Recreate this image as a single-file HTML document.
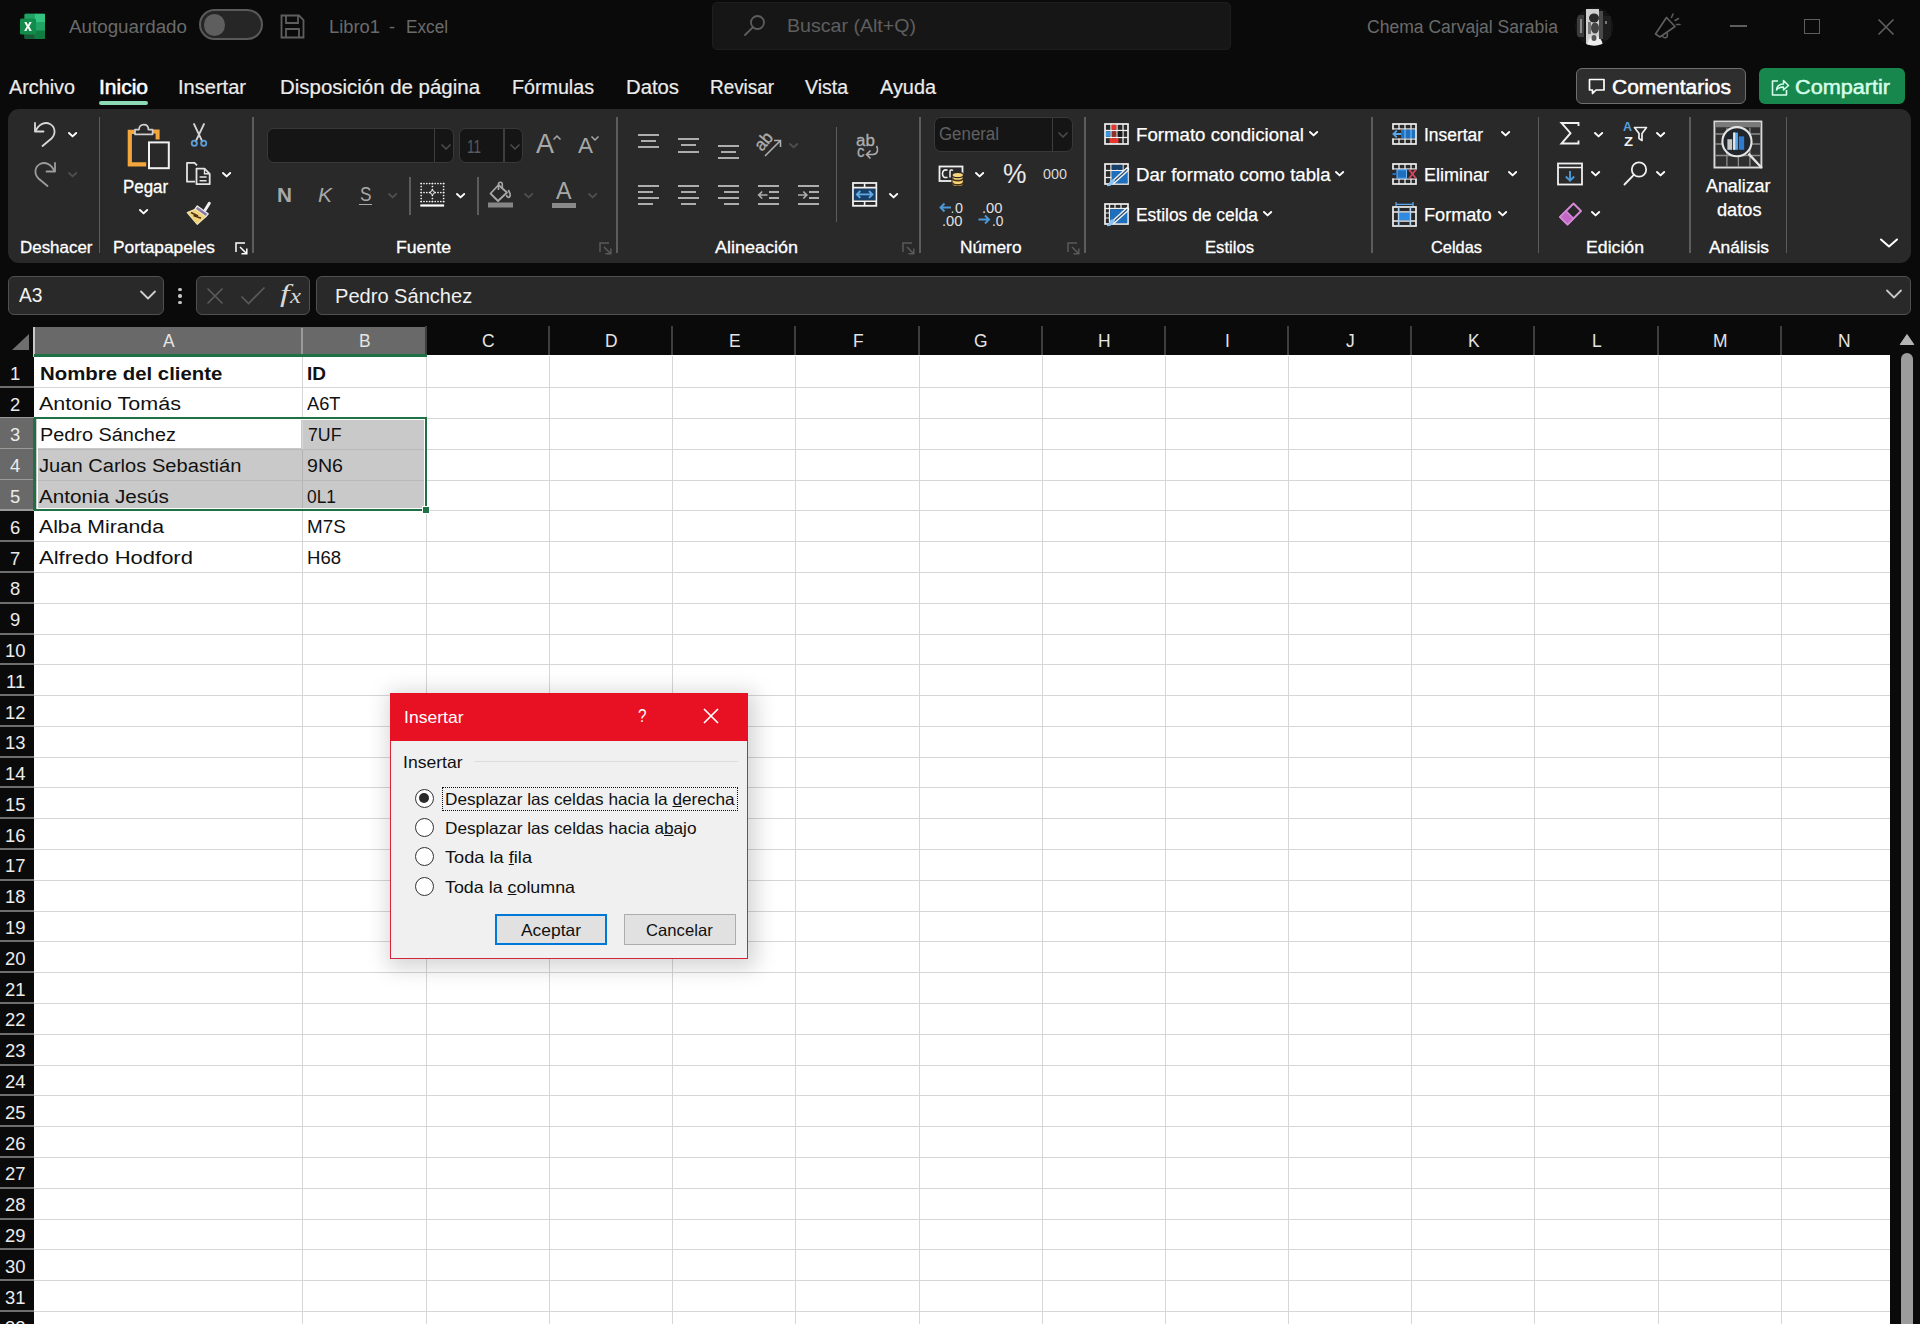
<!DOCTYPE html><html><head><meta charset="utf-8"><title>Excel</title><style>
html,body{margin:0;padding:0;background:#0a0a0a;overflow:hidden;}
html{width:1920px;height:1324px;}
body{width:1920px;height:1324px;position:relative;overflow:hidden;font-family:"Liberation Sans",sans-serif;}
.a{position:absolute;display:block;}
.t{position:absolute;white-space:pre;transform-origin:0 50%;display:block;}
svg{overflow:visible;}
</style></head><body>
<svg class="a" style="left:20px;top:13px;" width="26" height="26" viewBox="0 0 26 26">
<rect x="4.6" y="0.8" width="20.4" height="25" rx="1.5" fill="#21a366"/>
<rect x="4.6" y="0.8" width="10.2" height="8.4" fill="#21a366"/><rect x="14.8" y="0.8" width="10.2" height="8.4" fill="#33c481"/>
<rect x="4.6" y="9.2" width="10.2" height="8.3" fill="#107c41"/><rect x="14.8" y="9.2" width="10.2" height="8.3" fill="#21a366"/>
<rect x="4.6" y="17.5" width="10.2" height="8.3" fill="#185c37"/><rect x="14.8" y="17.5" width="10.2" height="8.3" fill="#107c41"/>
<rect x="0" y="5.6" width="16" height="16" rx="1.5" fill="#128c4a"/>
<path d="M4.2 9 L6.5 9 L8 12 L9.5 9 L11.7 9 L9.2 13.5 L11.8 18 L9.5 18 L7.9 14.9 L6.3 18 L4.1 18 L6.7 13.5 Z" fill="#fff"/>
</svg>
<span class="t" style="left:69.00px;top:17.76px;font-size:18px;line-height:18px;color:#6a6a6a;transform:scaleX(1.0433);">Autoguardado</span>
<div class="a" style="left:198.7px;top:9.3px;width:64.3px;height:31px;border:2px solid #5a5a5a;border-radius:16px;box-sizing:border-box;background:#262626;"></div>
<div class="a" style="left:203.5px;top:14px;width:21.5px;height:21.5px;background:#5e5e5e;border-radius:50%;"></div>
<svg class="a" style="left:279px;top:13px;" width="27" height="27" viewBox="0 0 27 27"><path d="M2.5 2.5 H20 L24.5 7 V24.5 H2.5 Z" fill="none" stroke="#5e5e5e" stroke-width="1.8"/>
<path d="M7 2.5 V10 H19 V2.5" fill="none" stroke="#5e5e5e" stroke-width="1.8"/>
<path d="M7 24.5 V16 H20 V24.5" fill="none" stroke="#5e5e5e" stroke-width="1.8"/></svg>
<span class="t" style="left:329.00px;top:17.76px;font-size:18px;line-height:18px;color:#6a6a6a;transform:scaleX(1.0192);">Libro1</span>
<span class="t" style="left:389.00px;top:17.76px;font-size:18px;line-height:18px;color:#6a6a6a;transform:scaleX(1.0010);">-</span>
<span class="t" style="left:406.00px;top:17.76px;font-size:18px;line-height:18px;color:#6a6a6a;transform:scaleX(0.9542);">Excel</span>
<div class="a" style="left:712px;top:2px;width:519px;height:48px;background:#161616;border-radius:5px;border:1px solid #1e1e1e;box-sizing:border-box;"></div>
<svg class="a" style="left:742px;top:13px;" width="26" height="26" viewBox="0 0 26 26"><circle cx="15.5" cy="9.5" r="6.5" fill="none" stroke="#5e5e5e" stroke-width="1.8"/><path d="M10.8 14.3 L3 22" stroke="#5e5e5e" stroke-width="1.8" stroke-linecap="round"/></svg>
<span class="t" style="left:787.00px;top:17.34px;font-size:18.5px;line-height:18.5px;color:#5e5e5e;transform:scaleX(1.0589);">Buscar (Alt+Q)</span>
<span class="t" style="left:1367.00px;top:17.76px;font-size:18px;line-height:18px;color:#6a6a6a;transform:scaleX(0.9739);">Chema Carvajal Sarabia</span>
<svg class="a" style="left:1575px;top:7px;" width="38.5" height="39" viewBox="0 0 38.5 39"><defs><clipPath id="av"><circle cx="19.2" cy="19.5" r="19.2"/></clipPath></defs>
<g clip-path="url(#av)"><rect width="39" height="39" fill="#141414"/>
<rect x="2" y="8" width="7" height="22" fill="#3c3c3c"/><rect x="5" y="12" width="2" height="14" fill="#8a8a8a"/>
<rect x="11" y="2" width="13" height="36" fill="#cfcfcf"/>
<ellipse cx="19" cy="11" rx="5" ry="4.5" fill="#2a2a2a"/><ellipse cx="20" cy="21" rx="4" ry="5.5" fill="#444"/><rect x="13" y="15" width="3" height="12" fill="#777"/>
<path d="M12 39 C13 31 16 29 20 29 C24 29 27 32 28 39 Z" fill="#eee"/><ellipse cx="19" cy="31" rx="2.5" ry="3" fill="#555"/>
<rect x="24" y="4" width="4" height="28" fill="#4a4a4a"/><rect x="28" y="9" width="8" height="24" fill="#1e1e1e"/><rect x="30" y="14" width="2" height="3" fill="#777"/></g></svg>
<svg class="a" style="left:1652px;top:12px;" width="30" height="28" viewBox="0 0 30 28"><path d="M3.5 22 L14.5 5.5 L23 14.5 L8 25 Z" fill="none" stroke="#5e5e5e" stroke-width="1.7" stroke-linejoin="round"/>
<path d="M10.5 23.5 C11 26.5 15.5 26.5 15.5 23 L15 20.3" fill="none" stroke="#5e5e5e" stroke-width="1.5"/>
<path d="M19.5 5.5 L21 2 M23 8.5 L26.5 6.5 M24.5 12.5 L28 12.5" stroke="#5e5e5e" stroke-width="1.5" stroke-linecap="round"/></svg>
<div class="a" style="left:1730px;top:25px;width:17px;height:1.6px;background:#5e5e5e;"></div>
<div class="a" style="left:1804px;top:18.7px;width:15.5px;height:15.3px;border:1.6px solid #5e5e5e;box-sizing:border-box;"></div>
<svg class="a" style="left:1876px;top:17px;" width="20" height="20" viewBox="0 0 20 20"><path d="M2.5 2.5 L17.5 17.5 M17.5 2.5 L2.5 17.5" stroke="#5e5e5e" stroke-width="1.7"/></svg>
<span class="t" style="left:9.00px;top:77.07px;font-size:20px;line-height:20px;color:#ececec;transform:scaleX(0.9897);-webkit-text-stroke:0.2px #ececec;">Archivo</span>
<span class="t" style="left:99.00px;top:77.07px;font-size:20px;line-height:20px;color:#fff;transform:scaleX(1.0495);-webkit-text-stroke:0.55px #fff;">Inicio</span>
<span class="t" style="left:178.00px;top:77.07px;font-size:20px;line-height:20px;color:#ececec;transform:scaleX(1.0029);-webkit-text-stroke:0.2px #ececec;">Insertar</span>
<span class="t" style="left:280.00px;top:77.07px;font-size:20px;line-height:20px;color:#ececec;transform:scaleX(1.0221);-webkit-text-stroke:0.2px #ececec;">Disposición de página</span>
<span class="t" style="left:512.00px;top:77.07px;font-size:20px;line-height:20px;color:#ececec;transform:scaleX(0.9838);-webkit-text-stroke:0.2px #ececec;">Fórmulas</span>
<span class="t" style="left:626.00px;top:77.07px;font-size:20px;line-height:20px;color:#ececec;transform:scaleX(1.0144);-webkit-text-stroke:0.2px #ececec;">Datos</span>
<span class="t" style="left:710.00px;top:77.07px;font-size:20px;line-height:20px;color:#ececec;transform:scaleX(0.9441);-webkit-text-stroke:0.2px #ececec;">Revisar</span>
<span class="t" style="left:805.00px;top:77.07px;font-size:20px;line-height:20px;color:#ececec;transform:scaleX(0.9750);-webkit-text-stroke:0.2px #ececec;">Vista</span>
<span class="t" style="left:880.00px;top:77.07px;font-size:20px;line-height:20px;color:#ececec;transform:scaleX(0.9938);-webkit-text-stroke:0.2px #ececec;">Ayuda</span>
<div class="a" style="left:99px;top:101px;width:49px;height:3.5px;background:#8cd9b4;border-radius:2px;"></div>
<div class="a" style="left:1575.5px;top:68.3px;width:170.5px;height:36.2px;background:#2e2e2e;border:1.5px solid #6e6e6e;border-radius:6px;box-sizing:border-box;"></div>
<svg class="a" style="left:1587px;top:77px;" width="20" height="20" viewBox="0 0 20 20"><path d="M2.5 2.5 H17 V13 H9 L5.5 16.5 V13 H2.5 Z" fill="none" stroke="#fff" stroke-width="1.7" stroke-linejoin="round"/></svg>
<span class="t" style="left:1612.00px;top:77.07px;font-size:20px;line-height:20px;color:#fff;transform:scaleX(1.0496);-webkit-text-stroke:0.5px #fff;">Comentarios</span>
<div class="a" style="left:1758.7px;top:68.3px;width:146.3px;height:36.2px;background:#18874e;border-radius:6px;"></div>
<svg class="a" style="left:1769px;top:76px;" width="22" height="22" viewBox="0 0 22 22"><path d="M9 5 H3.5 V19 H17.5 V14" fill="none" stroke="#d4ffea" stroke-width="1.6" stroke-linejoin="round"/>
<path d="M7.5 14 C8 9.5 11 8 14.5 8 V4.5 L19.5 9.5 L14.5 14 V11 C11.5 11 9.5 11.5 7.5 14 Z" fill="none" stroke="#d4ffea" stroke-width="1.5" stroke-linejoin="round"/></svg>
<span class="t" style="left:1795.00px;top:77.07px;font-size:20px;line-height:20px;color:#d4ffea;transform:scaleX(1.0821);-webkit-text-stroke:0.5px #d4ffea;">Compartir</span>
<div class="a" style="left:8px;top:109px;width:1903px;height:154px;background:#292929;border-radius:11px;"></div>
<div class="a" style="left:98.75px;top:117px;width:1.5px;height:136px;background:#5c5c5c;"></div>
<div class="a" style="left:252.25px;top:117px;width:1.5px;height:136px;background:#5c5c5c;"></div>
<div class="a" style="left:616.25px;top:117px;width:1.5px;height:136px;background:#5c5c5c;"></div>
<div class="a" style="left:919.25px;top:117px;width:1.5px;height:136px;background:#5c5c5c;"></div>
<div class="a" style="left:1084.25px;top:117px;width:1.5px;height:136px;background:#5c5c5c;"></div>
<div class="a" style="left:1371.25px;top:117px;width:1.5px;height:136px;background:#5c5c5c;"></div>
<div class="a" style="left:1537.75px;top:117px;width:1.5px;height:136px;background:#5c5c5c;"></div>
<div class="a" style="left:1689.25px;top:117px;width:1.5px;height:136px;background:#5c5c5c;"></div>
<div class="a" style="left:1785.75px;top:117px;width:1.5px;height:136px;background:#5c5c5c;"></div>
<div class="a" style="left:409.4px;top:177px;width:1.3px;height:38px;background:#5c5c5c;"></div>
<div class="a" style="left:477.4px;top:177px;width:1.3px;height:38px;background:#5c5c5c;"></div>
<div class="a" style="left:835.8px;top:127px;width:1.4px;height:95px;background:#5c5c5c;"></div>
<span class="t" style="left:20.00px;top:238.61px;font-size:17px;line-height:17px;color:#fff;transform:scaleX(0.9964);-webkit-text-stroke:0.3px #fff;">Deshacer</span>
<span class="t" style="left:113.00px;top:238.61px;font-size:17px;line-height:17px;color:#fff;transform:scaleX(1.0181);-webkit-text-stroke:0.3px #fff;">Portapapeles</span>
<span class="t" style="left:396.00px;top:238.61px;font-size:17px;line-height:17px;color:#fff;transform:scaleX(1.0392);-webkit-text-stroke:0.3px #fff;">Fuente</span>
<span class="t" style="left:714.50px;top:238.61px;font-size:17px;line-height:17px;color:#fff;transform:scaleX(1.0580);-webkit-text-stroke:0.3px #fff;">Alineación</span>
<span class="t" style="left:960.00px;top:238.61px;font-size:17px;line-height:17px;color:#fff;transform:scaleX(1.0171);-webkit-text-stroke:0.3px #fff;">Número</span>
<span class="t" style="left:1205.00px;top:238.61px;font-size:17px;line-height:17px;color:#fff;transform:scaleX(0.9786);-webkit-text-stroke:0.3px #fff;">Estilos</span>
<span class="t" style="left:1431.00px;top:238.61px;font-size:17px;line-height:17px;color:#fff;transform:scaleX(0.9637);-webkit-text-stroke:0.3px #fff;">Celdas</span>
<span class="t" style="left:1586.00px;top:238.61px;font-size:17px;line-height:17px;color:#fff;transform:scaleX(1.0402);-webkit-text-stroke:0.3px #fff;">Edición</span>
<span class="t" style="left:1709.00px;top:238.61px;font-size:17px;line-height:17px;color:#fff;transform:scaleX(1.0242);-webkit-text-stroke:0.3px #fff;">Análisis</span>
<svg class="a" style="left:235px;top:241.5px;" width="13" height="13" viewBox="0 0 13 13"><path d="M1 10 V1 H10" fill="none" stroke="#fff" stroke-width="1.5"/><path d="M5 5 L11.5 11.5 M11.8 6.5 V11.8 H6.5" fill="none" stroke="#fff" stroke-width="1.5"/></svg>
<svg class="a" style="left:599px;top:241.5px;" width="13" height="13" viewBox="0 0 13 13"><path d="M1 10 V1 H10" fill="none" stroke="#5a5a5a" stroke-width="1.5"/><path d="M5 5 L11.5 11.5 M11.8 6.5 V11.8 H6.5" fill="none" stroke="#5a5a5a" stroke-width="1.5"/></svg>
<svg class="a" style="left:902px;top:241.5px;" width="13" height="13" viewBox="0 0 13 13"><path d="M1 10 V1 H10" fill="none" stroke="#5a5a5a" stroke-width="1.5"/><path d="M5 5 L11.5 11.5 M11.8 6.5 V11.8 H6.5" fill="none" stroke="#5a5a5a" stroke-width="1.5"/></svg>
<svg class="a" style="left:1067px;top:241.5px;" width="13" height="13" viewBox="0 0 13 13"><path d="M1 10 V1 H10" fill="none" stroke="#5a5a5a" stroke-width="1.5"/><path d="M5 5 L11.5 11.5 M11.8 6.5 V11.8 H6.5" fill="none" stroke="#5a5a5a" stroke-width="1.5"/></svg>
<svg class="a" style="left:32px;top:119.5px;" width="26" height="28" viewBox="0 0 26 28"><path d="M3 3 V11.5 H11.5" fill="none" stroke="#d8d8d8" stroke-width="1.8" stroke-linecap="round" stroke-linejoin="round"/><path d="M3.5 11 C7 4 13 1.5 18 4 C23.5 7 24 14 19.5 18.5 L10.5 26" fill="none" stroke="#d8d8d8" stroke-width="1.8" stroke-linecap="round"/></svg>
<svg class="a" style="left:67.4px;top:130.8px;" width="11.2" height="7.4" viewBox="0 0 11.2 7.4"><path d="M2 2 L5.6 5.4 L9.2 2" fill="none" stroke="#fff" stroke-width="1.9" stroke-linecap="round" stroke-linejoin="round"/></svg>
<svg class="a" style="left:32px;top:159.6px;" width="26" height="28" viewBox="0 0 26 28"><path d="M23 3 V11.5 H14.5" fill="none" stroke="#9c9c9c" stroke-width="1.8" stroke-linecap="round" stroke-linejoin="round"/><path d="M22.5 11 C19 4 13 1.5 8 4 C2.5 7 2 14 6.5 18.5 L15.5 26" fill="none" stroke="#9c9c9c" stroke-width="1.8" stroke-linecap="round"/></svg>
<svg class="a" style="left:67.4px;top:171.3px;" width="11.2" height="7.4" viewBox="0 0 11.2 7.4"><path d="M2 2 L5.6 5.4 L9.2 2" fill="none" stroke="#4e4e4e" stroke-width="1.9" stroke-linecap="round" stroke-linejoin="round"/></svg>
<svg class="a" style="left:124px;top:120px;" width="50" height="52" viewBox="124 120 50 52"><path d="M136 131.8 H129.8 V164.3 H146.2" fill="none" stroke="#f2a63c" stroke-width="4.2"/><path d="M152 131.6 H157.6 V139.5" fill="none" stroke="#f2a63c" stroke-width="4"/>
<path d="M135 134.3 V129.6 H139 C139 126.3 141 124.6 143.7 124.6 C146.4 124.6 148.4 126.3 148.4 129.6 H152.6 V134.3 Z" fill="#292929" stroke="#cfcfcf" stroke-width="1.7" stroke-linejoin="round"/>
<rect x="149" y="142.4" width="19.8" height="25.8" fill="#292929" stroke="#f2f2f2" stroke-width="2"/></svg>
<span class="t" style="left:122.50px;top:177.76px;font-size:18px;line-height:18px;color:#fff;transform:scaleX(0.9368);-webkit-text-stroke:0.3px #fff;">Pegar</span>
<svg class="a" style="left:138.4px;top:208px;" width="11.2" height="7.4" viewBox="0 0 11.2 7.4"><path d="M2 2 L5.6 5.4 L9.2 2" fill="none" stroke="#fff" stroke-width="1.9" stroke-linecap="round" stroke-linejoin="round"/></svg>
<svg class="a" style="left:186px;top:120px;" width="26" height="30" viewBox="186 120 26 30"><path d="M194 124 L202.3 141.5 M204 124 L195.7 141.5" stroke="#d4d4d4" stroke-width="1.8" stroke-linecap="round"/>
<circle cx="194.3" cy="143.3" r="2.6" fill="none" stroke="#5a9fd8" stroke-width="1.8"/><circle cx="203.7" cy="143.3" r="2.6" fill="none" stroke="#5a9fd8" stroke-width="1.8"/></svg>
<svg class="a" style="left:184px;top:160px;" width="30" height="28" viewBox="184 160 30 28"><path d="M195 181.7 H187 V162.8 H194.5 L197 165.3" fill="none" stroke="#e4e4e4" stroke-width="1.8" stroke-linejoin="round"/>
<path d="M196.5 168.6 H204.5 L209.7 173.8 V184.2 H196.5 Z" fill="#292929" stroke="#e4e4e4" stroke-width="1.8" stroke-linejoin="round"/><path d="M204.5 168.6 V173.8 H209.7" fill="none" stroke="#e4e4e4" stroke-width="1.4"/>
<path d="M199.6 177 H206.6 M199.6 180.8 H206.6" stroke="#e4e4e4" stroke-width="1.5"/></svg>
<svg class="a" style="left:221.4px;top:171px;" width="11.2" height="7.4" viewBox="0 0 11.2 7.4"><path d="M2 2 L5.6 5.4 L9.2 2" fill="none" stroke="#fff" stroke-width="1.9" stroke-linecap="round" stroke-linejoin="round"/></svg>
<svg class="a" style="left:185px;top:199px;" width="30" height="30" viewBox="185 199 30 30"><path d="M209.3 203.3 L205.3 209.8" stroke="#f0f0f0" stroke-width="3" stroke-linecap="round"/>
<path d="M197.3 206 L208.2 213.8 L205.7 216.8 L195 209.2 Z" fill="#8a7aa8" stroke="#ececec" stroke-width="1.3" stroke-linejoin="round"/>
<path d="M195.2 209.2 L187.3 212.6 L197.3 224.3 L205.6 216.7 Z" fill="#f3d27a" stroke="#f0e2a8" stroke-width="1.2" stroke-linejoin="round"/>
<path d="M191 212.5 L198 216 M193.5 215.5 L201 218.3" stroke="#4a3418" stroke-width="1.6"/></svg>
<div class="a" style="left:267px;top:128px;width:187px;height:35px;background:#151515;border:1px solid #383838;border-radius:7px;box-sizing:border-box;"></div>
<div class="a" style="left:434.3px;top:129px;width:1.2px;height:33px;background:#3e3e3e;"></div>
<svg class="a" style="left:439.5px;top:143px;" width="12" height="8" viewBox="0 0 12 8"><path d="M2 2 L6 6 L10 2" fill="none" stroke="#4a4a4a" stroke-width="1.7" stroke-linecap="round" stroke-linejoin="round"/></svg>
<div class="a" style="left:459px;top:128px;width:64px;height:35px;background:#151515;border:1px solid #383838;border-radius:7px;box-sizing:border-box;"></div>
<div class="a" style="left:503.4px;top:129px;width:1.2px;height:33px;background:#3e3e3e;"></div>
<svg class="a" style="left:508.5px;top:143px;" width="12" height="8" viewBox="0 0 12 8"><path d="M2 2 L6 6 L10 2" fill="none" stroke="#4a4a4a" stroke-width="1.7" stroke-linecap="round" stroke-linejoin="round"/></svg>
<span class="t" style="left:466.50px;top:138.26px;font-size:18px;line-height:18px;color:#5a5a5a;transform:scaleX(0.7492);">11</span>
<span class="t" style="left:536.00px;top:131.14px;font-size:27px;line-height:27px;color:#a8a8a8;transform:scaleX(0.9995);">A</span>
<svg class="a" style="left:552px;top:134px;" width="10" height="7" viewBox="0 0 10 7"><path d="M1.5 5.5 L5 2 L8.5 5.5" fill="none" stroke="#a8a8a8" stroke-width="1.5"/></svg>
<span class="t" style="left:578.00px;top:135.38px;font-size:22px;line-height:22px;color:#a8a8a8;transform:scaleX(1.0222);">A</span>
<svg class="a" style="left:590px;top:135px;" width="10" height="7" viewBox="0 0 10 7"><path d="M1.5 1.5 L5 5 L8.5 1.5" fill="none" stroke="#a8a8a8" stroke-width="1.5"/></svg>
<span class="t" style="left:276.50px;top:184.65px;font-size:20.5px;line-height:20.5px;color:#a8a8a8;font-weight:bold;transform:scaleX(1.0132);">N</span>
<span class="t" style="left:318.00px;top:184.65px;font-size:20.5px;line-height:20.5px;color:#a8a8a8;font-style:italic;transform:scaleX(1.0239);">K</span>
<span class="t" style="left:359.50px;top:184.07px;font-size:20px;line-height:20px;color:#a8a8a8;transform:scaleX(0.8621);">S</span>
<div class="a" style="left:358.5px;top:203.5px;width:13.5px;height:1.6px;background:#a8a8a8;"></div>
<svg class="a" style="left:387.4px;top:192.3px;" width="11.2" height="7.4" viewBox="0 0 11.2 7.4"><path d="M2 2 L5.6 5.4 L9.2 2" fill="none" stroke="#4e4e4e" stroke-width="1.9" stroke-linecap="round" stroke-linejoin="round"/></svg>
<svg class="a" style="left:420px;top:182.3px;" width="25" height="25.5" viewBox="0 0 25 25.5"><circle cx="1.2" cy="1.5" r="0.85" fill="#f4f4f4"/><circle cx="4" cy="1.5" r="0.85" fill="#f4f4f4"/><circle cx="6.8" cy="1.5" r="0.85" fill="#f4f4f4"/><circle cx="9.6" cy="1.5" r="0.85" fill="#f4f4f4"/><circle cx="12.4" cy="1.5" r="0.85" fill="#f4f4f4"/><circle cx="15.2" cy="1.5" r="0.85" fill="#f4f4f4"/><circle cx="18" cy="1.5" r="0.85" fill="#f4f4f4"/><circle cx="20.8" cy="1.5" r="0.85" fill="#f4f4f4"/><circle cx="23.6" cy="1.5" r="0.85" fill="#f4f4f4"/><circle cx="1.2" cy="10.5" r="0.85" fill="#f4f4f4"/><circle cx="4" cy="10.5" r="0.85" fill="#f4f4f4"/><circle cx="6.8" cy="10.5" r="0.85" fill="#f4f4f4"/><circle cx="9.6" cy="10.5" r="0.85" fill="#f4f4f4"/><circle cx="12.4" cy="10.5" r="0.85" fill="#f4f4f4"/><circle cx="15.2" cy="10.5" r="0.85" fill="#f4f4f4"/><circle cx="18" cy="10.5" r="0.85" fill="#f4f4f4"/><circle cx="20.8" cy="10.5" r="0.85" fill="#f4f4f4"/><circle cx="23.6" cy="10.5" r="0.85" fill="#f4f4f4"/><circle cx="1.2" cy="19.5" r="0.85" fill="#f4f4f4"/><circle cx="4" cy="19.5" r="0.85" fill="#f4f4f4"/><circle cx="6.8" cy="19.5" r="0.85" fill="#f4f4f4"/><circle cx="9.6" cy="19.5" r="0.85" fill="#f4f4f4"/><circle cx="12.4" cy="19.5" r="0.85" fill="#f4f4f4"/><circle cx="15.2" cy="19.5" r="0.85" fill="#f4f4f4"/><circle cx="18" cy="19.5" r="0.85" fill="#f4f4f4"/><circle cx="20.8" cy="19.5" r="0.85" fill="#f4f4f4"/><circle cx="23.6" cy="19.5" r="0.85" fill="#f4f4f4"/><circle cx="1.2" cy="1.5" r="0.85" fill="#f4f4f4"/><circle cx="1.2" cy="4.5" r="0.85" fill="#f4f4f4"/><circle cx="1.2" cy="7.5" r="0.85" fill="#f4f4f4"/><circle cx="1.2" cy="10.5" r="0.85" fill="#f4f4f4"/><circle cx="1.2" cy="13.5" r="0.85" fill="#f4f4f4"/><circle cx="1.2" cy="16.5" r="0.85" fill="#f4f4f4"/><circle cx="1.2" cy="19.5" r="0.85" fill="#f4f4f4"/><circle cx="12.4" cy="1.5" r="0.85" fill="#f4f4f4"/><circle cx="12.4" cy="4.5" r="0.85" fill="#f4f4f4"/><circle cx="12.4" cy="7.5" r="0.85" fill="#f4f4f4"/><circle cx="12.4" cy="10.5" r="0.85" fill="#f4f4f4"/><circle cx="12.4" cy="13.5" r="0.85" fill="#f4f4f4"/><circle cx="12.4" cy="16.5" r="0.85" fill="#f4f4f4"/><circle cx="12.4" cy="19.5" r="0.85" fill="#f4f4f4"/><circle cx="23.6" cy="1.5" r="0.85" fill="#f4f4f4"/><circle cx="23.6" cy="4.5" r="0.85" fill="#f4f4f4"/><circle cx="23.6" cy="7.5" r="0.85" fill="#f4f4f4"/><circle cx="23.6" cy="10.5" r="0.85" fill="#f4f4f4"/><circle cx="23.6" cy="13.5" r="0.85" fill="#f4f4f4"/><circle cx="23.6" cy="16.5" r="0.85" fill="#f4f4f4"/><circle cx="23.6" cy="19.5" r="0.85" fill="#f4f4f4"/><circle cx="12.4" cy="10.5" r="1.9" fill="#292929" stroke="#fff" stroke-width="1"/><rect x="0.3" y="22.4" width="23.8" height="2.2" fill="#fff"/></svg>
<svg class="a" style="left:455.4px;top:192.3px;" width="11.2" height="7.4" viewBox="0 0 11.2 7.4"><path d="M2 2 L5.6 5.4 L9.2 2" fill="none" stroke="#fff" stroke-width="1.9" stroke-linecap="round" stroke-linejoin="round"/></svg>
<svg class="a" style="left:487px;top:181px;" width="27" height="27" viewBox="0 0 27 27"><path d="M11.5 4 L20 11.5 L11 20 L3.5 12.5 Z" fill="none" stroke="#a8a8a8" stroke-width="1.8" stroke-linejoin="round"/>
<path d="M11.5 9 V3.2 C11.5 0.5 15.3 0.5 15.3 3.2 V7.2" fill="none" stroke="#a8a8a8" stroke-width="1.6"/>
<path d="M21.3 9 C23.3 12.5 24 14 22.8 15.6 C21.5 17 19.5 16 19.8 14" fill="none" stroke="#a8a8a8" stroke-width="1.7"/>
<rect x="1" y="21.5" width="25" height="5" fill="#858585"/></svg>
<svg class="a" style="left:522.9px;top:192.3px;" width="11.2" height="7.4" viewBox="0 0 11.2 7.4"><path d="M2 2 L5.6 5.4 L9.2 2" fill="none" stroke="#4e4e4e" stroke-width="1.9" stroke-linecap="round" stroke-linejoin="round"/></svg>
<span class="t" style="left:556.00px;top:179.26px;font-size:24.5px;line-height:24.5px;color:#a8a8a8;transform:scaleX(0.9485);">A</span>
<div class="a" style="left:551.5px;top:202.5px;width:24.5px;height:5px;background:#8a8a8a;"></div>
<svg class="a" style="left:586.9px;top:192.3px;" width="11.2" height="7.4" viewBox="0 0 11.2 7.4"><path d="M2 2 L5.6 5.4 L9.2 2" fill="none" stroke="#4e4e4e" stroke-width="1.9" stroke-linecap="round" stroke-linejoin="round"/></svg>
<div class="a" style="left:637.5px;top:134px;width:21.5px;height:2px;background:#adadad;"></div>
<div class="a" style="left:641px;top:140px;width:15px;height:2px;background:#adadad;"></div>
<div class="a" style="left:637.5px;top:146px;width:21.5px;height:2px;background:#adadad;"></div>
<div class="a" style="left:677.5px;top:138px;width:21.5px;height:2px;background:#adadad;"></div>
<div class="a" style="left:681px;top:144px;width:15px;height:2px;background:#adadad;"></div>
<div class="a" style="left:677.5px;top:151px;width:21.5px;height:2px;background:#adadad;"></div>
<div class="a" style="left:717.5px;top:145px;width:21.5px;height:2px;background:#adadad;"></div>
<div class="a" style="left:721px;top:151px;width:15px;height:2px;background:#adadad;"></div>
<div class="a" style="left:717.5px;top:157px;width:21.5px;height:2px;background:#adadad;"></div>
<div class="a" style="left:637.5px;top:185px;width:21.5px;height:2px;background:#adadad;"></div>
<div class="a" style="left:637.5px;top:191px;width:15px;height:2px;background:#adadad;"></div>
<div class="a" style="left:637.5px;top:197px;width:21.5px;height:2px;background:#adadad;"></div>
<div class="a" style="left:637.5px;top:203px;width:15px;height:2px;background:#adadad;"></div>
<div class="a" style="left:677.5px;top:185px;width:21.5px;height:2px;background:#adadad;"></div>
<div class="a" style="left:681px;top:191px;width:15px;height:2px;background:#adadad;"></div>
<div class="a" style="left:677.5px;top:197px;width:21.5px;height:2px;background:#adadad;"></div>
<div class="a" style="left:681px;top:203px;width:15px;height:2px;background:#adadad;"></div>
<div class="a" style="left:717.5px;top:185px;width:21.5px;height:2px;background:#adadad;"></div>
<div class="a" style="left:724px;top:191px;width:15px;height:2px;background:#adadad;"></div>
<div class="a" style="left:717.5px;top:197px;width:21.5px;height:2px;background:#adadad;"></div>
<div class="a" style="left:724px;top:203px;width:15px;height:2px;background:#adadad;"></div>
<div class="a" style="left:757.5px;top:185px;width:21.5px;height:2px;background:#adadad;"></div>
<div class="a" style="left:769px;top:191px;width:10px;height:2px;background:#adadad;"></div>
<div class="a" style="left:769px;top:197px;width:10px;height:2px;background:#adadad;"></div>
<div class="a" style="left:757.5px;top:203px;width:21.5px;height:2px;background:#adadad;"></div>
<svg class="a" style="left:757px;top:189px;" width="12" height="12" viewBox="0 0 12 12"><path d="M10.5 6 H2 M5.2 2.5 L1.7 6 L5.2 9.5" fill="none" stroke="#adadad" stroke-width="1.7"/></svg>
<div class="a" style="left:797.5px;top:185px;width:21.5px;height:2px;background:#adadad;"></div>
<div class="a" style="left:809px;top:191px;width:10px;height:2px;background:#adadad;"></div>
<div class="a" style="left:809px;top:197px;width:10px;height:2px;background:#adadad;"></div>
<div class="a" style="left:797.5px;top:203px;width:21.5px;height:2px;background:#adadad;"></div>
<svg class="a" style="left:797px;top:189px;" width="12" height="12" viewBox="0 0 12 12"><path d="M1 6 H9.5 M6.3 2.5 L9.8 6 L6.3 9.5" fill="none" stroke="#adadad" stroke-width="1.7"/></svg>
<span class="t" style="left:753.5px;top:132.5px;font-size:17.5px;line-height:17px;-webkit-text-stroke:0.35px #adadad;color:#adadad;transform:rotate(-50deg) scaleX(0.95);transform-origin:50% 50%;">ab</span>
<svg class="a" style="left:762px;top:136px;" width="22" height="22" viewBox="0 0 22 22"><path d="M3 20 L18 5 M12 4.5 H18.5 V11" fill="none" stroke="#adadad" stroke-width="1.6"/></svg>
<svg class="a" style="left:787.9px;top:142.3px;" width="11.2" height="7.4" viewBox="0 0 11.2 7.4"><path d="M2 2 L5.6 5.4 L9.2 2" fill="none" stroke="#4e4e4e" stroke-width="1.9" stroke-linecap="round" stroke-linejoin="round"/></svg>
<span class="t" style="left:856.30px;top:132.66px;font-size:16px;line-height:16px;color:#adadad;transform:scaleX(1.0564);-webkit-text-stroke:0.3px #adadad;">ab</span>
<span class="t" style="left:857.00px;top:143.76px;font-size:16px;line-height:16px;color:#adadad;transform:scaleX(0.9375);-webkit-text-stroke:0.3px #adadad;">c</span>
<svg class="a" style="left:864px;top:145px;" width="16" height="15" viewBox="0 0 16 15"><path d="M12.5 1 C14.5 4 14 9 9 9.5 H3 M6.5 5.5 L2.5 9.5 L6.5 13.5" fill="none" stroke="#adadad" stroke-width="1.6"/></svg>
<svg class="a" style="left:852px;top:182.3px;" width="25.5" height="25" viewBox="0 0 25.5 25"><rect x="1" y="1" width="23.3" height="22.8" fill="none" stroke="#f0f0f0" stroke-width="1.8"/>
<rect x="1.9" y="6.2" width="21.5" height="12.4" fill="#173f68"/>
<path d="M1 5.6 H24.3 M1 19.2 H24.3 M12.6 1 V5.6 M12.6 19.2 V23.8" stroke="#f0f0f0" stroke-width="1.6"/>
<path d="M5 12.4 H20.3 M8.3 9 L4.9 12.4 L8.3 15.8 M17 9 L20.4 12.4 L17 15.8" fill="none" stroke="#62aae6" stroke-width="1.9"/></svg>
<svg class="a" style="left:888.4px;top:192.3px;" width="11.2" height="7.4" viewBox="0 0 11.2 7.4"><path d="M2 2 L5.6 5.4 L9.2 2" fill="none" stroke="#fff" stroke-width="1.9" stroke-linecap="round" stroke-linejoin="round"/></svg>
<div class="a" style="left:934px;top:117px;width:138.5px;height:34.5px;background:#151515;border:1px solid #383838;border-radius:7px;box-sizing:border-box;"></div>
<div class="a" style="left:1052px;top:118px;width:1.2px;height:32.5px;background:#3e3e3e;"></div>
<svg class="a" style="left:1057px;top:131px;" width="12" height="8" viewBox="0 0 12 8"><path d="M2 2 L6 6 L10 2" fill="none" stroke="#4a4a4a" stroke-width="1.7" stroke-linecap="round" stroke-linejoin="round"/></svg>
<span class="t" style="left:938.50px;top:125.26px;font-size:18px;line-height:18px;color:#606060;transform:scaleX(0.9369);">General</span>
<svg class="a" style="left:938px;top:165px;" width="28" height="23" viewBox="0 0 28 23"><rect x="1.5" y="1.5" width="23" height="14.5" fill="none" stroke="#f0f0f0" stroke-width="1.8"/>
<path d="M9.5 5.2 C6 4 4.5 6.5 4.5 8.7 C4.5 11 6 13.5 9.5 12.2" fill="none" stroke="#f0f0f0" stroke-width="1.6"/><path d="M12 12.5 V6 C12 5 14 4.5 15 5.5" fill="none" stroke="#f0f0f0" stroke-width="1.5"/>
<path d="M14 10 V19 C14 22.5 25.5 22.5 25.5 19 V10" fill="#f7d37a" stroke="#292929" stroke-width="1.2"/><ellipse cx="19.75" cy="10" rx="5.75" ry="2.6" fill="#f7d37a" stroke="#292929" stroke-width="1.2"/>
<path d="M14.6 13.3 C15 16.3 24.5 16.3 24.9 13.3 M14.6 17.6 C15 20.6 24.5 20.6 24.9 17.6" fill="none" stroke="#4a3414" stroke-width="1.7"/></svg>
<svg class="a" style="left:974.4px;top:170.8px;" width="11.2" height="7.4" viewBox="0 0 11.2 7.4"><path d="M2 2 L5.6 5.4 L9.2 2" fill="none" stroke="#fff" stroke-width="1.9" stroke-linecap="round" stroke-linejoin="round"/></svg>
<span class="t" style="left:1003.00px;top:161.14px;font-size:27px;line-height:27px;color:#e8e8e8;transform:scaleX(0.9788);">%</span>
<span class="t" style="left:1042.50px;top:166.65px;font-size:14px;line-height:14px;color:#d8d8d8;transform:scaleX(1.0273);">000</span>
<span class="t" style="left:955.00px;top:201.15px;font-size:14px;line-height:14px;color:#e0e0e0;transform:scaleX(1.0273);">0</span>
<span class="t" style="left:950.50px;top:201.15px;font-size:14px;line-height:14px;color:#e0e0e0;transform:scaleX(0.7711);">.</span>
<span class="t" style="left:942.00px;top:213.65px;font-size:14px;line-height:14px;color:#e0e0e0;transform:scaleX(1.0532);">.00</span>
<svg class="a" style="left:938px;top:201px;" width="15" height="13" viewBox="0 0 15 13"><path d="M13 6.5 H2.5 M6.5 2.5 L2.5 6.5 L6.5 10.5" fill="none" stroke="#4a98d8" stroke-width="1.9"/></svg>
<span class="t" style="left:982.00px;top:201.15px;font-size:14px;line-height:14px;color:#e0e0e0;transform:scaleX(1.0532);">.00</span>
<span class="t" style="left:991.50px;top:213.65px;font-size:14px;line-height:14px;color:#e0e0e0;transform:scaleX(0.9848);">.0</span>
<svg class="a" style="left:977px;top:213px;" width="15" height="13" viewBox="0 0 15 13"><path d="M1.5 6.5 H12 M8 2.5 L12 6.5 L8 10.5" fill="none" stroke="#4a98d8" stroke-width="1.9"/></svg>
<svg class="a" style="left:1104px;top:123px;" width="25" height="22" viewBox="0 0 25 22"><rect x="1" y="1" width="23" height="20" fill="none" stroke="#f0f0f0" stroke-width="1.7"/><path d="M7 1 V21" stroke="#f0f0f0" stroke-width="1.3"/><path d="M13 1 V21" stroke="#f0f0f0" stroke-width="1.3"/><path d="M19 1 V21" stroke="#f0f0f0" stroke-width="1.3"/><path d="M1 7.5 H24" stroke="#f0f0f0" stroke-width="1.3"/><path d="M1 14.5 H24" stroke="#f0f0f0" stroke-width="1.3"/><rect x="7.7" y="1.8" width="4.6" height="5" fill="#e8352e"/><rect x="2" y="8.2" width="4.3" height="5.6" fill="#3a96dd"/><rect x="7.7" y="8.2" width="4.6" height="5.6" fill="#e8352e" opacity="0.55"/>
<rect x="5.5" y="15.2" width="9" height="4.8" fill="#e8352e"/><rect x="13.7" y="8.2" width="4.6" height="5.6" fill="#1a1a1a"/></svg>
<svg class="a" style="left:1104px;top:163px;" width="25" height="22" viewBox="0 0 25 22"><rect x="1" y="1" width="23" height="20" fill="none" stroke="#f0f0f0" stroke-width="1.7"/><path d="M7 1 V21" stroke="#f0f0f0" stroke-width="1.3"/><path d="M13 1 V21" stroke="#f0f0f0" stroke-width="1.3"/><path d="M19 1 V21" stroke="#f0f0f0" stroke-width="1.3"/><path d="M1 7.5 H24" stroke="#f0f0f0" stroke-width="1.3"/><path d="M1 14.5 H24" stroke="#f0f0f0" stroke-width="1.3"/><rect x="7.7" y="8" width="16" height="12.5" fill="#1f6fbf"/><rect x="7.7" y="1.8" width="10.8" height="5" fill="#17406b"/><path d="M23.3 6.2 L9.5 19" fill="none" stroke="#f4f4f4" stroke-width="4" stroke-linecap="round"/><path d="M22.8 6.7 L10.5 18" stroke="#2d4f72" stroke-width="1.3" stroke-linecap="round"/>
<path d="M10.5 17.2 C9 21.5 6 23.2 3 22.6 C5 21.5 6 19.5 7 17 Z" fill="#8cc4f2" stroke="#8cc4f2" stroke-width="1"/></svg>
<svg class="a" style="left:1104px;top:203px;" width="25" height="22" viewBox="0 0 25 22"><rect x="1" y="1" width="23" height="20" fill="none" stroke="#f0f0f0" stroke-width="1.7"/><path d="M5.5 1 V21" stroke="#f0f0f0" stroke-width="1.3"/><path d="M1 5.5 H24" stroke="#f0f0f0" stroke-width="1.3"/><rect x="6.2" y="6.2" width="17" height="14" fill="#1f6fbf"/><path d="M1 15 H5 M1 10 H5 M11 1 V5 M17 1 V5" stroke="#f0f0f0" stroke-width="1.2"/><path d="M23.3 6.2 L9.5 19" fill="none" stroke="#f4f4f4" stroke-width="4" stroke-linecap="round"/><path d="M22.8 6.7 L10.5 18" stroke="#2d4f72" stroke-width="1.3" stroke-linecap="round"/>
<path d="M10.5 17.2 C9 21.5 6 23.2 3 22.6 C5 21.5 6 19.5 7 17 Z" fill="#8cc4f2" stroke="#8cc4f2" stroke-width="1"/></svg>
<span class="t" style="left:1135.50px;top:125.76px;font-size:18px;line-height:18px;color:#fff;transform:scaleX(1.0364);-webkit-text-stroke:0.25px #fff;">Formato condicional</span>
<svg class="a" style="left:1308.4px;top:130.3px;" width="11.2" height="7.4" viewBox="0 0 11.2 7.4"><path d="M2 2 L5.6 5.4 L9.2 2" fill="none" stroke="#fff" stroke-width="1.9" stroke-linecap="round" stroke-linejoin="round"/></svg>
<span class="t" style="left:1135.50px;top:165.76px;font-size:18px;line-height:18px;color:#fff;transform:scaleX(1.0341);-webkit-text-stroke:0.25px #fff;">Dar formato como tabla</span>
<svg class="a" style="left:1334.4px;top:170.3px;" width="11.2" height="7.4" viewBox="0 0 11.2 7.4"><path d="M2 2 L5.6 5.4 L9.2 2" fill="none" stroke="#fff" stroke-width="1.9" stroke-linecap="round" stroke-linejoin="round"/></svg>
<span class="t" style="left:1135.50px;top:205.76px;font-size:18px;line-height:18px;color:#fff;transform:scaleX(0.9676);-webkit-text-stroke:0.25px #fff;">Estilos de celda</span>
<svg class="a" style="left:1262.4px;top:210.3px;" width="11.2" height="7.4" viewBox="0 0 11.2 7.4"><path d="M2 2 L5.6 5.4 L9.2 2" fill="none" stroke="#fff" stroke-width="1.9" stroke-linecap="round" stroke-linejoin="round"/></svg>
<svg class="a" style="left:1392px;top:123px;" width="25" height="22" viewBox="0 0 25 22"><rect x="1" y="1" width="23" height="20" fill="none" stroke="#f0f0f0" stroke-width="1.7"/><path d="M7 1 V21" stroke="#f0f0f0" stroke-width="1.3"/><path d="M13 1 V21" stroke="#f0f0f0" stroke-width="1.3"/><path d="M19 1 V21" stroke="#f0f0f0" stroke-width="1.3"/><path d="M1 6 H24" stroke="#f0f0f0" stroke-width="1.3"/><path d="M1 16 H24" stroke="#f0f0f0" stroke-width="1.3"/><rect x="9" y="6.7" width="14" height="8.6" fill="#1f6fbf"/><path d="M13 6.7 V15.3 M19 6.7 V15.3" stroke="#6fb6f2" stroke-width="1.2"/>
<rect x="0" y="6.7" width="8.8" height="8.6" fill="#292929"/><path d="M9 11 H1.5 M4.8 7.6 L1.4 11 L4.8 14.4" fill="none" stroke="#5aa6ea" stroke-width="1.8"/></svg>
<svg class="a" style="left:1392px;top:163px;" width="25" height="22" viewBox="0 0 25 22"><rect x="1" y="1" width="23" height="20" fill="none" stroke="#f0f0f0" stroke-width="1.7"/><path d="M7 1 V21" stroke="#f0f0f0" stroke-width="1.3"/><path d="M13 1 V21" stroke="#f0f0f0" stroke-width="1.3"/><path d="M19 1 V21" stroke="#f0f0f0" stroke-width="1.3"/><path d="M1 6 H24" stroke="#f0f0f0" stroke-width="1.3"/><path d="M1 16 H24" stroke="#f0f0f0" stroke-width="1.3"/><rect x="0" y="6.7" width="25" height="8.6" fill="#292929"/><rect x="5" y="6.7" width="9.5" height="8.6" fill="#1f6fbf" stroke="#6fb6f2" stroke-width="1.1"/>
<path d="M0.5 11 H5" stroke="#1f6fbf" stroke-width="2"/><path d="M17 6.5 L24 15.5 M24 6.5 L17 15.5" stroke="#d6455d" stroke-width="1.9"/></svg>
<svg class="a" style="left:1392px;top:201px;" width="25" height="26" viewBox="0 0 25 26"><path d="M4 3.3 H21 M4 1 V5.6 M21 1 V5.6" stroke="#5aa6ea" stroke-width="1.3" fill="none"/>
<rect x="1" y="6" width="23" height="19" fill="none" stroke="#f0f0f0" stroke-width="1.7"/><path d="M6.5 6 V25 M18.5 6 V25 M1 11 H24 M1 20 H24" stroke="#f0f0f0" stroke-width="1.3"/>
<rect x="7.2" y="11.7" width="10.6" height="7.6" fill="#2e8ae0"/><path d="M7 6 V25 M18 6 V25" stroke="#6fb6f2" stroke-width="1"/></svg>
<span class="t" style="left:1423.50px;top:125.76px;font-size:18px;line-height:18px;color:#fff;transform:scaleX(0.9668);-webkit-text-stroke:0.25px #fff;">Insertar</span>
<svg class="a" style="left:1500.4px;top:130.3px;" width="11.2" height="7.4" viewBox="0 0 11.2 7.4"><path d="M2 2 L5.6 5.4 L9.2 2" fill="none" stroke="#fff" stroke-width="1.9" stroke-linecap="round" stroke-linejoin="round"/></svg>
<span class="t" style="left:1423.50px;top:165.76px;font-size:18px;line-height:18px;color:#fff;transform:scaleX(0.9997);-webkit-text-stroke:0.25px #fff;">Eliminar</span>
<svg class="a" style="left:1506.9px;top:170.3px;" width="11.2" height="7.4" viewBox="0 0 11.2 7.4"><path d="M2 2 L5.6 5.4 L9.2 2" fill="none" stroke="#fff" stroke-width="1.9" stroke-linecap="round" stroke-linejoin="round"/></svg>
<span class="t" style="left:1423.50px;top:205.76px;font-size:18px;line-height:18px;color:#fff;transform:scaleX(1.0071);-webkit-text-stroke:0.25px #fff;">Formato</span>
<svg class="a" style="left:1496.9px;top:210.3px;" width="11.2" height="7.4" viewBox="0 0 11.2 7.4"><path d="M2 2 L5.6 5.4 L9.2 2" fill="none" stroke="#fff" stroke-width="1.9" stroke-linecap="round" stroke-linejoin="round"/></svg>
<svg class="a" style="left:1559px;top:121px;" width="23" height="25" viewBox="0 0 23 25"><path d="M19.5 5 V2 H2.5 L11.5 12.2 L2.5 22.5 H19.5 V19.5" fill="none" stroke="#f0f0f0" stroke-width="1.9" stroke-linejoin="miter"/></svg>
<svg class="a" style="left:1593.4px;top:130.8px;" width="11.2" height="7.4" viewBox="0 0 11.2 7.4"><path d="M2 2 L5.6 5.4 L9.2 2" fill="none" stroke="#fff" stroke-width="1.9" stroke-linecap="round" stroke-linejoin="round"/></svg>
<span class="t" style="left:1623.30px;top:119.87px;font-size:13.5px;line-height:13.5px;color:#5a9fd8;font-weight:bold;transform:scaleX(0.9231);">A</span>
<span class="t" style="left:1623.50px;top:135.07px;font-size:13.5px;line-height:13.5px;color:#f0f0f0;font-weight:bold;transform:scaleX(1.0914);">Z</span>
<svg class="a" style="left:1633px;top:126px;" width="15" height="17" viewBox="0 0 15 17"><path d="M1.5 1.5 H13.5 L9 7.5 V14.5 L6 12.5 V7.5 Z" fill="none" stroke="#f0f0f0" stroke-width="1.7" stroke-linejoin="round"/></svg>
<svg class="a" style="left:1654.9px;top:130.8px;" width="11.2" height="7.4" viewBox="0 0 11.2 7.4"><path d="M2 2 L5.6 5.4 L9.2 2" fill="none" stroke="#fff" stroke-width="1.9" stroke-linecap="round" stroke-linejoin="round"/></svg>
<svg class="a" style="left:1557px;top:162px;" width="26" height="24" viewBox="0 0 26 24"><rect x="1" y="1.5" width="24" height="21" fill="none" stroke="#f0f0f0" stroke-width="1.8"/><path d="M1 5.5 H25" stroke="#f0f0f0" stroke-width="1.5"/>
<path d="M13 9 V18.5 M8.8 14.5 L13 18.7 L17.2 14.5" fill="none" stroke="#4a9ad8" stroke-width="1.9"/></svg>
<svg class="a" style="left:1590.4px;top:170.3px;" width="11.2" height="7.4" viewBox="0 0 11.2 7.4"><path d="M2 2 L5.6 5.4 L9.2 2" fill="none" stroke="#fff" stroke-width="1.9" stroke-linecap="round" stroke-linejoin="round"/></svg>
<svg class="a" style="left:1622px;top:160px;" width="27" height="27" viewBox="0 0 27 27"><circle cx="17" cy="9.5" r="7.2" fill="none" stroke="#f0f0f0" stroke-width="1.8"/><path d="M11.8 14.8 L2.5 24.5" stroke="#f0f0f0" stroke-width="1.9" stroke-linecap="round"/></svg>
<svg class="a" style="left:1654.9px;top:170.3px;" width="11.2" height="7.4" viewBox="0 0 11.2 7.4"><path d="M2 2 L5.6 5.4 L9.2 2" fill="none" stroke="#fff" stroke-width="1.9" stroke-linecap="round" stroke-linejoin="round"/></svg>
<svg class="a" style="left:1556px;top:201px;" width="28" height="27" viewBox="0 0 28 27"><path d="M17.5 2.5 L25 10 L11.5 23.5 L4 16 Z" fill="none" stroke="#d48bd6" stroke-width="1.9" stroke-linejoin="round"/>
<path d="M10 10 L17.5 17.5 L11.5 23.5 L4 16 Z" fill="#c366c6" stroke="#d48bd6" stroke-width="1.5" stroke-linejoin="round"/></svg>
<svg class="a" style="left:1590.4px;top:209.8px;" width="11.2" height="7.4" viewBox="0 0 11.2 7.4"><path d="M2 2 L5.6 5.4 L9.2 2" fill="none" stroke="#fff" stroke-width="1.9" stroke-linecap="round" stroke-linejoin="round"/></svg>
<svg class="a" style="left:1713.2px;top:119.8px;" width="50.8" height="50" viewBox="0 0 53 52"><rect x="1.5" y="1.5" width="49" height="48" fill="#2f2f2f" stroke="#d8d8d8" stroke-width="2"/>
<rect x="2.5" y="2.5" width="47" height="5" fill="#7a7a7a"/>
<path d="M2 14.5 H50 M2 25 H50 M2 37 H50 M14.5 8 V49 M26.5 8 V49 M38.5 8 V49" stroke="#8a8a8a" stroke-width="1.4"/>
<circle cx="25" cy="22.5" r="15.2" fill="#20262c" stroke="#e4e4e4" stroke-width="2.2"/>
<rect x="15" y="20" width="5" height="11" fill="#c8c8c8"/><rect x="21" y="13" width="5" height="18" fill="#5aa6ea"/><rect x="27" y="17" width="5.5" height="14" fill="#2e7bd0"/><rect x="21" y="13" width="2.2" height="18" fill="#dfe9f5"/>
<path d="M37 35 L51 50" stroke="#e4e4e4" stroke-width="2.4"/></svg>
<span class="t" style="left:1706.00px;top:176.76px;font-size:18px;line-height:18px;color:#fff;transform:scaleX(0.9918);-webkit-text-stroke:0.25px #fff;">Analizar</span>
<span class="t" style="left:1717.00px;top:201.26px;font-size:18px;line-height:18px;color:#fff;transform:scaleX(1.0105);-webkit-text-stroke:0.25px #fff;">datos</span>
<svg class="a" style="left:1878px;top:236px;" width="22" height="14" viewBox="0 0 22 14"><path d="M3 3.5 L11 10.5 L19 3.5" fill="none" stroke="#fff" stroke-width="2" stroke-linecap="round" stroke-linejoin="round"/></svg>
<div class="a" style="left:8px;top:275.5px;width:156px;height:39.8px;background:#292929;border:1.3px solid #505050;border-radius:6px;box-sizing:border-box;"></div>
<div class="a" style="left:196px;top:275.5px;width:113.5px;height:39.8px;background:#292929;border:1.3px solid #505050;border-radius:6px;box-sizing:border-box;"></div>
<div class="a" style="left:316px;top:275.5px;width:1595px;height:39.8px;background:#292929;border:1.3px solid #505050;border-radius:6px;box-sizing:border-box;"></div>
<span class="t" style="left:19.00px;top:286.49px;font-size:19.5px;line-height:19.5px;color:#f0f0f0;transform:scaleX(0.9853);">A3</span>
<svg class="a" style="left:138px;top:288px;" width="20" height="14" viewBox="0 0 20 14"><path d="M3 3.5 L10 10.5 L17 3.5" fill="none" stroke="#d0d0d0" stroke-width="1.8" stroke-linecap="round" stroke-linejoin="round"/></svg>
<div class="a" style="left:178.3px;top:288px;width:3.4px;height:3.4px;background:#c4c4c4;border-radius:50%;"></div>
<div class="a" style="left:178.3px;top:294.3px;width:3.4px;height:3.4px;background:#c4c4c4;border-radius:50%;"></div>
<div class="a" style="left:178.3px;top:300.6px;width:3.4px;height:3.4px;background:#c4c4c4;border-radius:50%;"></div>
<svg class="a" style="left:205px;top:286px;" width="20" height="20" viewBox="0 0 20 20"><path d="M2.5 2.5 L17.5 17.5 M17.5 2.5 L2.5 17.5" stroke="#5a5a5a" stroke-width="1.7"/></svg>
<svg class="a" style="left:239px;top:285px;" width="28" height="21" viewBox="0 0 28 21"><path d="M2.5 11.5 L9.5 18.5 L25.5 2.5" fill="none" stroke="#5a5a5a" stroke-width="1.7"/></svg>
<span class="t" style="left:279.50px;top:281.34px;font-size:25px;line-height:25px;color:#d8d8d8;font-style:italic;font-family:'Liberation Serif',serif;transform:scaleX(1.3678);">f</span>
<span class="t" style="left:289.50px;top:285.57px;font-size:20px;line-height:20px;color:#d8d8d8;font-style:italic;font-family:'Liberation Serif',serif;transform:scaleX(1.2392);">x</span>
<span class="t" style="left:334.80px;top:286.62px;font-size:19.7px;line-height:19.7px;color:#f0f0f0;transform:scaleX(1.0193);">Pedro Sánchez</span>
<svg class="a" style="left:1884px;top:287px;" width="20" height="14" viewBox="0 0 20 14"><path d="M3 3.5 L10 10.5 L17 3.5" fill="none" stroke="#c8c8c8" stroke-width="1.8" stroke-linecap="round" stroke-linejoin="round"/></svg>
<div class="a" style="left:34.3px;top:355px;width:1855.7px;height:969px;background:#fff;"></div>
<div class="a" style="left:34.3px;top:417.98px;width:391.7px;height:92.37px;background:#c9c9c9;"></div>
<div class="a" style="left:37.5px;top:420.48px;width:263.5px;height:27.29px;background:#fff;"></div>
<div class="a" style="left:301.5px;top:356.4px;width:1.2px;height:967.6px;background:#d6d6d6;"></div>
<div class="a" style="left:425.5px;top:356.4px;width:1.2px;height:967.6px;background:#d6d6d6;"></div>
<div class="a" style="left:548.5px;top:356.4px;width:1.2px;height:967.6px;background:#d6d6d6;"></div>
<div class="a" style="left:671.5px;top:356.4px;width:1.2px;height:967.6px;background:#d6d6d6;"></div>
<div class="a" style="left:794.5px;top:356.4px;width:1.2px;height:967.6px;background:#d6d6d6;"></div>
<div class="a" style="left:918.5px;top:356.4px;width:1.2px;height:967.6px;background:#d6d6d6;"></div>
<div class="a" style="left:1041.5px;top:356.4px;width:1.2px;height:967.6px;background:#d6d6d6;"></div>
<div class="a" style="left:1164.5px;top:356.4px;width:1.2px;height:967.6px;background:#d6d6d6;"></div>
<div class="a" style="left:1287.5px;top:356.4px;width:1.2px;height:967.6px;background:#d6d6d6;"></div>
<div class="a" style="left:1410.5px;top:356.4px;width:1.2px;height:967.6px;background:#d6d6d6;"></div>
<div class="a" style="left:1533.5px;top:356.4px;width:1.2px;height:967.6px;background:#d6d6d6;"></div>
<div class="a" style="left:1657.5px;top:356.4px;width:1.2px;height:967.6px;background:#d6d6d6;"></div>
<div class="a" style="left:1780.5px;top:356.4px;width:1.2px;height:967.6px;background:#d6d6d6;"></div>
<div class="a" style="left:34.3px;top:386.5px;width:1855.7px;height:1.2px;background:#d6d6d6;"></div>
<div class="a" style="left:34.3px;top:417.5px;width:1855.7px;height:1.2px;background:#d6d6d6;"></div>
<div class="a" style="left:34.3px;top:448.5px;width:1855.7px;height:1.2px;background:#d6d6d6;"></div>
<div class="a" style="left:34.3px;top:479.5px;width:1855.7px;height:1.2px;background:#d6d6d6;"></div>
<div class="a" style="left:34.3px;top:509.5px;width:1855.7px;height:1.2px;background:#d6d6d6;"></div>
<div class="a" style="left:34.3px;top:540.5px;width:1855.7px;height:1.2px;background:#d6d6d6;"></div>
<div class="a" style="left:34.3px;top:571.5px;width:1855.7px;height:1.2px;background:#d6d6d6;"></div>
<div class="a" style="left:34.3px;top:602.5px;width:1855.7px;height:1.2px;background:#d6d6d6;"></div>
<div class="a" style="left:34.3px;top:633.5px;width:1855.7px;height:1.2px;background:#d6d6d6;"></div>
<div class="a" style="left:34.3px;top:663.5px;width:1855.7px;height:1.2px;background:#d6d6d6;"></div>
<div class="a" style="left:34.3px;top:694.5px;width:1855.7px;height:1.2px;background:#d6d6d6;"></div>
<div class="a" style="left:34.3px;top:725.5px;width:1855.7px;height:1.2px;background:#d6d6d6;"></div>
<div class="a" style="left:34.3px;top:756.5px;width:1855.7px;height:1.2px;background:#d6d6d6;"></div>
<div class="a" style="left:34.3px;top:786.5px;width:1855.7px;height:1.2px;background:#d6d6d6;"></div>
<div class="a" style="left:34.3px;top:817.5px;width:1855.7px;height:1.2px;background:#d6d6d6;"></div>
<div class="a" style="left:34.3px;top:848.5px;width:1855.7px;height:1.2px;background:#d6d6d6;"></div>
<div class="a" style="left:34.3px;top:879.5px;width:1855.7px;height:1.2px;background:#d6d6d6;"></div>
<div class="a" style="left:34.3px;top:910.5px;width:1855.7px;height:1.2px;background:#d6d6d6;"></div>
<div class="a" style="left:34.3px;top:940.5px;width:1855.7px;height:1.2px;background:#d6d6d6;"></div>
<div class="a" style="left:34.3px;top:971.5px;width:1855.7px;height:1.2px;background:#d6d6d6;"></div>
<div class="a" style="left:34.3px;top:1002.5px;width:1855.7px;height:1.2px;background:#d6d6d6;"></div>
<div class="a" style="left:34.3px;top:1033.5px;width:1855.7px;height:1.2px;background:#d6d6d6;"></div>
<div class="a" style="left:34.3px;top:1064.5px;width:1855.7px;height:1.2px;background:#d6d6d6;"></div>
<div class="a" style="left:34.3px;top:1094.5px;width:1855.7px;height:1.2px;background:#d6d6d6;"></div>
<div class="a" style="left:34.3px;top:1125.5px;width:1855.7px;height:1.2px;background:#d6d6d6;"></div>
<div class="a" style="left:34.3px;top:1156.5px;width:1855.7px;height:1.2px;background:#d6d6d6;"></div>
<div class="a" style="left:34.3px;top:1187.5px;width:1855.7px;height:1.2px;background:#d6d6d6;"></div>
<div class="a" style="left:34.3px;top:1218.5px;width:1855.7px;height:1.2px;background:#d6d6d6;"></div>
<div class="a" style="left:34.3px;top:1248.5px;width:1855.7px;height:1.2px;background:#d6d6d6;"></div>
<div class="a" style="left:34.3px;top:1279.5px;width:1855.7px;height:1.2px;background:#d6d6d6;"></div>
<div class="a" style="left:34.3px;top:1310.5px;width:1855.7px;height:1.2px;background:#d6d6d6;"></div>
<div class="a" style="left:301.5px;top:448.77px;width:1.2px;height:61.58px;background:#b4b4b4;"></div>
<div class="a" style="left:34.3px;top:448.5px;width:391.7px;height:1.2px;background:#b9b9b9;"></div>
<div class="a" style="left:34.3px;top:479.5px;width:391.7px;height:1.2px;background:#b9b9b9;"></div>
<div class="a" style="left:34.3px;top:326.5px;width:391.7px;height:29px;background:#696969;"></div>
<div class="a" style="left:301.3px;top:327.5px;width:1.4px;height:27px;background:#9a9a9a;"></div>
<div class="a" style="left:33.3px;top:326.5px;width:1.3px;height:30px;background:#c8c8c8;"></div>
<span class="t" style="left:163.15px;top:332.14px;font-size:18.5px;line-height:18.5px;color:#e4e4e4;transform:scaleX(0.9400);">A</span>
<span class="t" style="left:359.00px;top:332.14px;font-size:18.5px;line-height:18.5px;color:#e4e4e4;transform:scaleX(0.9400);">B</span>
<span class="t" style="left:482.10px;top:332.14px;font-size:18.5px;line-height:18.5px;color:#e4e4e4;transform:scaleX(0.9400);">C</span>
<div class="a" style="left:425.4px;top:325.5px;width:1.3px;height:29.5px;background:#3e3e3e;"></div>
<span class="t" style="left:605.25px;top:332.14px;font-size:18.5px;line-height:18.5px;color:#e4e4e4;transform:scaleX(0.9400);">D</span>
<div class="a" style="left:548.4px;top:325.5px;width:1.3px;height:29.5px;background:#3e3e3e;"></div>
<span class="t" style="left:728.88px;top:332.14px;font-size:18.5px;line-height:18.5px;color:#e4e4e4;transform:scaleX(0.9400);">E</span>
<div class="a" style="left:671.4px;top:325.5px;width:1.3px;height:29.5px;background:#3e3e3e;"></div>
<span class="t" style="left:852.51px;top:332.14px;font-size:18.5px;line-height:18.5px;color:#e4e4e4;transform:scaleX(0.9400);">F</span>
<div class="a" style="left:794.4px;top:325.5px;width:1.3px;height:29.5px;background:#3e3e3e;"></div>
<span class="t" style="left:974.21px;top:332.14px;font-size:18.5px;line-height:18.5px;color:#e4e4e4;transform:scaleX(0.9400);">G</span>
<div class="a" style="left:918.4px;top:325.5px;width:1.3px;height:29.5px;background:#3e3e3e;"></div>
<span class="t" style="left:1097.85px;top:332.14px;font-size:18.5px;line-height:18.5px;color:#e4e4e4;transform:scaleX(0.9400);">H</span>
<div class="a" style="left:1041.4px;top:325.5px;width:1.3px;height:29.5px;background:#3e3e3e;"></div>
<span class="t" style="left:1224.86px;top:332.14px;font-size:18.5px;line-height:18.5px;color:#e4e4e4;transform:scaleX(0.9400);">I</span>
<div class="a" style="left:1164.4px;top:325.5px;width:1.3px;height:29.5px;background:#3e3e3e;"></div>
<span class="t" style="left:1346.08px;top:332.14px;font-size:18.5px;line-height:18.5px;color:#e4e4e4;transform:scaleX(0.9400);">J</span>
<div class="a" style="left:1287.4px;top:325.5px;width:1.3px;height:29.5px;background:#3e3e3e;"></div>
<span class="t" style="left:1467.78px;top:332.14px;font-size:18.5px;line-height:18.5px;color:#e4e4e4;transform:scaleX(0.9400);">K</span>
<div class="a" style="left:1410.4px;top:325.5px;width:1.3px;height:29.5px;background:#3e3e3e;"></div>
<span class="t" style="left:1591.89px;top:332.14px;font-size:18.5px;line-height:18.5px;color:#e4e4e4;transform:scaleX(0.9400);">L</span>
<div class="a" style="left:1533.4px;top:325.5px;width:1.3px;height:29.5px;background:#3e3e3e;"></div>
<span class="t" style="left:1712.63px;top:332.14px;font-size:18.5px;line-height:18.5px;color:#e4e4e4;transform:scaleX(0.9400);">M</span>
<div class="a" style="left:1657.4px;top:325.5px;width:1.3px;height:29.5px;background:#3e3e3e;"></div>
<span class="t" style="left:1837.52px;top:332.14px;font-size:18.5px;line-height:18.5px;color:#e4e4e4;transform:scaleX(0.9400);">N</span>
<div class="a" style="left:1780.4px;top:325.5px;width:1.3px;height:29.5px;background:#3e3e3e;"></div>
<div class="a" style="left:34.3px;top:354px;width:392.7px;height:2.6px;background:#1e7145;"></div>
<svg class="a" style="left:11px;top:333px;" width="19" height="18" viewBox="0 0 19 18"><path d="M18 1 V17 H1 Z" fill="#6e6e6e"/></svg>
<div class="a" style="left:0px;top:386.4px;width:33.8px;height:1.2px;background:#6e6e6e;"></div>
<span class="t" style="left:10.18px;top:363.81px;font-size:19px;line-height:19px;color:#ececec;transform:scaleX(0.9700);">1</span>
<div class="a" style="left:0px;top:417.4px;width:33.8px;height:1.2px;background:#9a9a9a;"></div>
<span class="t" style="left:10.18px;top:394.60px;font-size:19px;line-height:19px;color:#ececec;transform:scaleX(0.9700);">2</span>
<div class="a" style="left:0px;top:417.98px;width:34.3px;height:30.79px;background:#696969;"></div>
<div class="a" style="left:0px;top:448.4px;width:33.8px;height:1.2px;background:#9a9a9a;"></div>
<span class="t" style="left:10.18px;top:425.39px;font-size:19px;line-height:19px;color:#ececec;transform:scaleX(0.9700);">3</span>
<div class="a" style="left:0px;top:448.77px;width:34.3px;height:30.79px;background:#696969;"></div>
<div class="a" style="left:0px;top:479.4px;width:33.8px;height:1.2px;background:#9a9a9a;"></div>
<span class="t" style="left:10.18px;top:456.18px;font-size:19px;line-height:19px;color:#ececec;transform:scaleX(0.9700);">4</span>
<div class="a" style="left:0px;top:479.56px;width:34.3px;height:30.79px;background:#696969;"></div>
<div class="a" style="left:0px;top:509.4px;width:33.8px;height:1.2px;background:#9a9a9a;"></div>
<span class="t" style="left:10.18px;top:486.97px;font-size:19px;line-height:19px;color:#ececec;transform:scaleX(0.9700);">5</span>
<div class="a" style="left:0px;top:540.4px;width:33.8px;height:1.2px;background:#6e6e6e;"></div>
<span class="t" style="left:10.18px;top:517.76px;font-size:19px;line-height:19px;color:#ececec;transform:scaleX(0.9700);">6</span>
<div class="a" style="left:0px;top:571.4px;width:33.8px;height:1.2px;background:#6e6e6e;"></div>
<span class="t" style="left:10.18px;top:548.55px;font-size:19px;line-height:19px;color:#ececec;transform:scaleX(0.9700);">7</span>
<div class="a" style="left:0px;top:602.4px;width:33.8px;height:1.2px;background:#6e6e6e;"></div>
<span class="t" style="left:10.18px;top:579.34px;font-size:19px;line-height:19px;color:#ececec;transform:scaleX(0.9700);">8</span>
<div class="a" style="left:0px;top:633.4px;width:33.8px;height:1.2px;background:#6e6e6e;"></div>
<span class="t" style="left:10.18px;top:610.13px;font-size:19px;line-height:19px;color:#ececec;transform:scaleX(0.9700);">9</span>
<div class="a" style="left:0px;top:663.4px;width:33.8px;height:1.2px;background:#6e6e6e;"></div>
<span class="t" style="left:5.05px;top:640.92px;font-size:19px;line-height:19px;color:#ececec;transform:scaleX(0.9700);">10</span>
<div class="a" style="left:0px;top:694.4px;width:33.8px;height:1.2px;background:#6e6e6e;"></div>
<span class="t" style="left:5.73px;top:671.71px;font-size:19px;line-height:19px;color:#ececec;transform:scaleX(0.9700);">11</span>
<div class="a" style="left:0px;top:725.4px;width:33.8px;height:1.2px;background:#6e6e6e;"></div>
<span class="t" style="left:5.05px;top:702.50px;font-size:19px;line-height:19px;color:#ececec;transform:scaleX(0.9700);">12</span>
<div class="a" style="left:0px;top:756.4px;width:33.8px;height:1.2px;background:#6e6e6e;"></div>
<span class="t" style="left:5.05px;top:733.29px;font-size:19px;line-height:19px;color:#ececec;transform:scaleX(0.9700);">13</span>
<div class="a" style="left:0px;top:786.4px;width:33.8px;height:1.2px;background:#6e6e6e;"></div>
<span class="t" style="left:5.05px;top:764.08px;font-size:19px;line-height:19px;color:#ececec;transform:scaleX(0.9700);">14</span>
<div class="a" style="left:0px;top:817.4px;width:33.8px;height:1.2px;background:#6e6e6e;"></div>
<span class="t" style="left:5.05px;top:794.87px;font-size:19px;line-height:19px;color:#ececec;transform:scaleX(0.9700);">15</span>
<div class="a" style="left:0px;top:848.4px;width:33.8px;height:1.2px;background:#6e6e6e;"></div>
<span class="t" style="left:5.05px;top:825.66px;font-size:19px;line-height:19px;color:#ececec;transform:scaleX(0.9700);">16</span>
<div class="a" style="left:0px;top:879.4px;width:33.8px;height:1.2px;background:#6e6e6e;"></div>
<span class="t" style="left:5.05px;top:856.45px;font-size:19px;line-height:19px;color:#ececec;transform:scaleX(0.9700);">17</span>
<div class="a" style="left:0px;top:910.4px;width:33.8px;height:1.2px;background:#6e6e6e;"></div>
<span class="t" style="left:5.05px;top:887.24px;font-size:19px;line-height:19px;color:#ececec;transform:scaleX(0.9700);">18</span>
<div class="a" style="left:0px;top:940.4px;width:33.8px;height:1.2px;background:#6e6e6e;"></div>
<span class="t" style="left:5.05px;top:918.03px;font-size:19px;line-height:19px;color:#ececec;transform:scaleX(0.9700);">19</span>
<div class="a" style="left:0px;top:971.4px;width:33.8px;height:1.2px;background:#6e6e6e;"></div>
<span class="t" style="left:5.05px;top:948.82px;font-size:19px;line-height:19px;color:#ececec;transform:scaleX(0.9700);">20</span>
<div class="a" style="left:0px;top:1002.4px;width:33.8px;height:1.2px;background:#6e6e6e;"></div>
<span class="t" style="left:5.05px;top:979.61px;font-size:19px;line-height:19px;color:#ececec;transform:scaleX(0.9700);">21</span>
<div class="a" style="left:0px;top:1033.4px;width:33.8px;height:1.2px;background:#6e6e6e;"></div>
<span class="t" style="left:5.05px;top:1010.40px;font-size:19px;line-height:19px;color:#ececec;transform:scaleX(0.9700);">22</span>
<div class="a" style="left:0px;top:1064.4px;width:33.8px;height:1.2px;background:#6e6e6e;"></div>
<span class="t" style="left:5.05px;top:1041.19px;font-size:19px;line-height:19px;color:#ececec;transform:scaleX(0.9700);">23</span>
<div class="a" style="left:0px;top:1094.4px;width:33.8px;height:1.2px;background:#6e6e6e;"></div>
<span class="t" style="left:5.05px;top:1071.98px;font-size:19px;line-height:19px;color:#ececec;transform:scaleX(0.9700);">24</span>
<div class="a" style="left:0px;top:1125.4px;width:33.8px;height:1.2px;background:#6e6e6e;"></div>
<span class="t" style="left:5.05px;top:1102.77px;font-size:19px;line-height:19px;color:#ececec;transform:scaleX(0.9700);">25</span>
<div class="a" style="left:0px;top:1156.4px;width:33.8px;height:1.2px;background:#6e6e6e;"></div>
<span class="t" style="left:5.05px;top:1133.56px;font-size:19px;line-height:19px;color:#ececec;transform:scaleX(0.9700);">26</span>
<div class="a" style="left:0px;top:1187.4px;width:33.8px;height:1.2px;background:#6e6e6e;"></div>
<span class="t" style="left:5.05px;top:1164.35px;font-size:19px;line-height:19px;color:#ececec;transform:scaleX(0.9700);">27</span>
<div class="a" style="left:0px;top:1218.4px;width:33.8px;height:1.2px;background:#6e6e6e;"></div>
<span class="t" style="left:5.05px;top:1195.14px;font-size:19px;line-height:19px;color:#ececec;transform:scaleX(0.9700);">28</span>
<div class="a" style="left:0px;top:1248.4px;width:33.8px;height:1.2px;background:#6e6e6e;"></div>
<span class="t" style="left:5.05px;top:1225.93px;font-size:19px;line-height:19px;color:#ececec;transform:scaleX(0.9700);">29</span>
<div class="a" style="left:0px;top:1279.4px;width:33.8px;height:1.2px;background:#6e6e6e;"></div>
<span class="t" style="left:5.05px;top:1256.72px;font-size:19px;line-height:19px;color:#ececec;transform:scaleX(0.9700);">30</span>
<div class="a" style="left:0px;top:1310.4px;width:33.8px;height:1.2px;background:#6e6e6e;"></div>
<span class="t" style="left:5.05px;top:1287.51px;font-size:19px;line-height:19px;color:#ececec;transform:scaleX(0.9700);">31</span>
<div class="a" style="left:0px;top:1341.4px;width:33.8px;height:1.2px;background:#6e6e6e;"></div>
<span class="t" style="left:5.05px;top:1318.30px;font-size:19px;line-height:19px;color:#ececec;transform:scaleX(0.9700);">32</span>
<div class="a" style="left:32.7px;top:417.98px;width:2.4px;height:92.37px;background:#1e7145;"></div>
<span class="t" style="left:40.00px;top:363.54px;font-size:19.2px;line-height:19.2px;color:#111;font-weight:bold;transform:scaleX(1.0625);">Nombre del cliente</span>
<span class="t" style="left:307.00px;top:363.54px;font-size:19.2px;line-height:19.2px;color:#111;font-weight:bold;transform:scaleX(0.9896);">ID</span>
<span class="t" style="left:39.00px;top:394.33px;font-size:19.2px;line-height:19.2px;color:#111;transform:scaleX(1.1212);">Antonio Tomás</span>
<span class="t" style="left:307.00px;top:394.33px;font-size:19.2px;line-height:19.2px;color:#111;transform:scaleX(0.9514);">A6T</span>
<span class="t" style="left:40.00px;top:425.12px;font-size:19.2px;line-height:19.2px;color:#111;transform:scaleX(1.0359);">Pedro Sánchez</span>
<span class="t" style="left:307.50px;top:425.12px;font-size:19.2px;line-height:19.2px;color:#111;transform:scaleX(0.9236);">7UF</span>
<span class="t" style="left:38.50px;top:455.91px;font-size:19.2px;line-height:19.2px;color:#111;transform:scaleX(1.0483);">Juan Carlos Sebastián</span>
<span class="t" style="left:307.00px;top:455.91px;font-size:19.2px;line-height:19.2px;color:#111;transform:scaleX(1.0221);">9N6</span>
<span class="t" style="left:39.00px;top:486.70px;font-size:19.2px;line-height:19.2px;color:#111;transform:scaleX(1.0779);">Antonia Jesús</span>
<span class="t" style="left:307.00px;top:486.70px;font-size:19.2px;line-height:19.2px;color:#111;transform:scaleX(0.9053);">0L1</span>
<span class="t" style="left:39.00px;top:517.49px;font-size:19.2px;line-height:19.2px;color:#111;transform:scaleX(1.1050);">Alba Miranda</span>
<span class="t" style="left:307.00px;top:517.49px;font-size:19.2px;line-height:19.2px;color:#111;transform:scaleX(0.9803);">M7S</span>
<span class="t" style="left:39.00px;top:548.28px;font-size:19.2px;line-height:19.2px;color:#111;transform:scaleX(1.1452);">Alfredo Hodford</span>
<span class="t" style="left:307.00px;top:548.28px;font-size:19.2px;line-height:19.2px;color:#111;transform:scaleX(0.9653);">H68</span>
<div class="a" style="left:33.8px;top:416.68px;width:393.5px;height:94.77px;border:2.5px solid #1e7145;box-sizing:border-box;"></div>
<div class="a" style="left:37px;top:419.18px;width:387.8px;height:89.77px;border:1px solid #fff;box-sizing:border-box;"></div>
<div class="a" style="left:421.7px;top:505.7px;width:8.6px;height:8.6px;background:#1e7145;border:1.3px solid #fff;box-sizing:border-box;"></div>
<div class="a" style="left:1890px;top:318px;width:30px;height:1006px;background:#0a0a0a;"></div>
<svg class="a" style="left:1899px;top:333px;" width="16" height="13" viewBox="0 0 16 13"><path d="M8 1.5 L14.8 11.5 H1.2 Z" fill="#b4b4b4" stroke="#b4b4b4" stroke-width="1" stroke-linejoin="round"/></svg>
<div class="a" style="left:1900.5px;top:352.5px;width:12.5px;height:971.5px;background:#9c9c9c;border-radius:6px 6px 0 0;"></div>
<div class="a" style="left:390px;top:693px;width:358px;height:265.5px;background:#f0f0f0;border:1.2px solid #d8223a;box-sizing:border-box;box-shadow:3px 4px 20px 5px rgba(0,0,0,0.17);"></div>
<div class="a" style="left:390px;top:693px;width:358px;height:47.5px;background:#e81123;"></div>
<span class="t" style="left:403.50px;top:708.61px;font-size:17px;line-height:17px;color:#fff;transform:scaleX(1.0324);">Insertar</span>
<span class="t" style="left:637.50px;top:707.69px;font-size:17.5px;line-height:17.5px;color:#fff;transform:scaleX(0.8734);">?</span>
<svg class="a" style="left:702px;top:707px;" width="18" height="18" viewBox="0 0 18 18"><path d="M2 2 L16 16 M16 2 L2 16" stroke="#fff" stroke-width="1.7"/></svg>
<span class="t" style="left:402.50px;top:753.73px;font-size:16.5px;line-height:16.5px;color:#101010;transform:scaleX(1.0638);">Insertar</span>
<div class="a" style="left:474px;top:760.5px;width:264px;height:1.3px;background:#dcdcdc;"></div>
<div class="a" style="left:414.5px;top:788.8px;width:19px;height:19px;background:#fff;border:1.5px solid #333;border-radius:50%;box-sizing:border-box;"></div>
<div class="a" style="left:419px;top:793.3px;width:10px;height:10px;background:#2a2a2a;border-radius:50%;"></div>
<span class="t" style="left:445.20px;top:790.53px;font-size:16.5px;line-height:16.5px;color:#101010;transform:scaleX(1.0418);">Desplazar las celdas hacia la <u>d</u>erecha</span>
<div class="a" style="left:414.5px;top:818.3px;width:19px;height:19px;background:#fff;border:1.5px solid #333;border-radius:50%;box-sizing:border-box;"></div>
<span class="t" style="left:445.20px;top:820.03px;font-size:16.5px;line-height:16.5px;color:#101010;transform:scaleX(1.0426);">Desplazar las celdas hacia a<u>b</u>ajo</span>
<div class="a" style="left:414.5px;top:847.3px;width:19px;height:19px;background:#fff;border:1.5px solid #333;border-radius:50%;box-sizing:border-box;"></div>
<span class="t" style="left:445.20px;top:849.03px;font-size:16.5px;line-height:16.5px;color:#101010;transform:scaleX(1.1030);">Toda la <u>f</u>ila</span>
<div class="a" style="left:414.5px;top:876.7px;width:19px;height:19px;background:#fff;border:1.5px solid #333;border-radius:50%;box-sizing:border-box;"></div>
<span class="t" style="left:445.20px;top:878.53px;font-size:16.5px;line-height:16.5px;color:#101010;transform:scaleX(1.0820);">Toda la <u>c</u>olumna</span>
<div class="a" style="left:442px;top:787px;width:295.5px;height:23.5px;border:1.3px dotted #111;box-sizing:border-box;"></div>
<div class="a" style="left:494.5px;top:913.5px;width:112px;height:31.5px;background:#e1e1e1;border:2.6px solid #0078d7;box-sizing:border-box;"></div>
<span class="t" style="left:520.70px;top:921.63px;font-size:16.5px;line-height:16.5px;color:#101010;transform:scaleX(1.0552);">Aceptar</span>
<div class="a" style="left:623.7px;top:913.5px;width:112px;height:31.5px;background:#e1e1e1;border:1.3px solid #adadad;box-sizing:border-box;"></div>
<span class="t" style="left:646.00px;top:921.63px;font-size:16.5px;line-height:16.5px;color:#101010;transform:scaleX(1.0102);">Cancelar</span>
</body></html>
